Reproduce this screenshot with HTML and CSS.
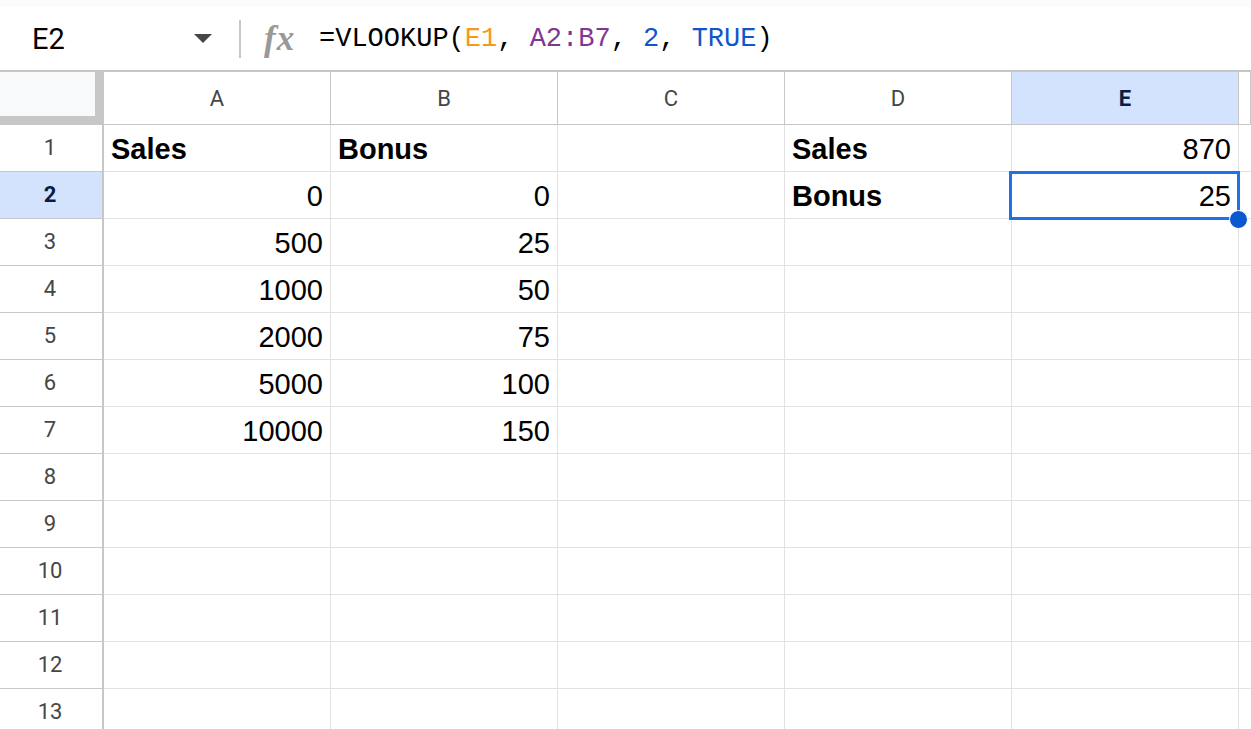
FILE: index.html
```html
<!DOCTYPE html>
<html>
<head>
<meta charset="utf-8">
<link rel="stylesheet" href="styles.css">
</head>
<body>
<div class="topstrip"></div>
<div class="fbar">
  <div class="namebox"><span class="ref">E2</span><span class="caret"></span></div>
  <div class="sep"></div>
  <span class="fx">fx</span>
  <div class="formula">=VLOOKUP(<span class="c-o">E1</span>, <span class="c-p">A2:B7</span>, <span class="c-b">2</span>, <span class="c-b">TRUE</span>)</div>
</div>
<div class="grid">
  <div class="corner"></div>
  <div class="ch">A</div>
  <div class="ch">B</div>
  <div class="ch">C</div>
  <div class="ch">D</div>
  <div class="ch ch-sel">E</div>
  <div class="ch"></div>

  <div class="rh">1</div>
  <div class="c b">Sales</div>
  <div class="c b">Bonus</div>
  <div class="c"></div>
  <div class="c b">Sales</div>
  <div class="c n">870</div>
  <div class="c"></div>

  <div class="rh rh-sel">2</div>
  <div class="c n">0</div>
  <div class="c n">0</div>
  <div class="c"></div>
  <div class="c b">Bonus</div>
  <div class="c n active">25<span class="selbox"></span><span class="handle"></span></div>
  <div class="c"></div>

  <div class="rh">3</div>
  <div class="c n">500</div>
  <div class="c n">25</div>
  <div class="c"></div><div class="c"></div><div class="c"></div><div class="c"></div>

  <div class="rh">4</div>
  <div class="c n">1000</div>
  <div class="c n">50</div>
  <div class="c"></div><div class="c"></div><div class="c"></div><div class="c"></div>

  <div class="rh">5</div>
  <div class="c n">2000</div>
  <div class="c n">75</div>
  <div class="c"></div><div class="c"></div><div class="c"></div><div class="c"></div>

  <div class="rh">6</div>
  <div class="c n">5000</div>
  <div class="c n">100</div>
  <div class="c"></div><div class="c"></div><div class="c"></div><div class="c"></div>

  <div class="rh">7</div>
  <div class="c n">10000</div>
  <div class="c n">150</div>
  <div class="c"></div><div class="c"></div><div class="c"></div><div class="c"></div>

  <div class="rh">8</div>
  <div class="c"></div><div class="c"></div><div class="c"></div><div class="c"></div><div class="c"></div><div class="c"></div>
  <div class="rh">9</div>
  <div class="c"></div><div class="c"></div><div class="c"></div><div class="c"></div><div class="c"></div><div class="c"></div>
  <div class="rh">10</div>
  <div class="c"></div><div class="c"></div><div class="c"></div><div class="c"></div><div class="c"></div><div class="c"></div>
  <div class="rh">11</div>
  <div class="c"></div><div class="c"></div><div class="c"></div><div class="c"></div><div class="c"></div><div class="c"></div>
  <div class="rh">12</div>
  <div class="c"></div><div class="c"></div><div class="c"></div><div class="c"></div><div class="c"></div><div class="c"></div>
  <div class="rh">13</div>
  <div class="c"></div><div class="c"></div><div class="c"></div><div class="c"></div><div class="c"></div><div class="c"></div>
</div>
</body>
</html>
```

FILE: styles.css
```css
* { box-sizing: border-box; }
html, body {
  margin: 0;
  padding: 0;
  width: 1251px;
  height: 729px;
  overflow: hidden;
  background: #ffffff;
}
.topstrip {
  height: 7px;
  background: #f9fbfd;
}
.fbar {
  height: 65px;
  display: flex;
  align-items: center;
  border-bottom: 2px solid #c7c7c7;
  background: #fff;
}
.namebox {
  width: 225px;
  display: flex;
  align-items: center;
  padding-left: 32px;
  padding-right: 13px;
}
.ref {
  font-family: Roboto, "Liberation Sans", sans-serif;
  font-size: 29px;
  color: #000;
  position: relative;
  top: 0;
}
.caret {
  margin-left: auto;
  width: 0;
  height: 0;
  border-left: 9px solid transparent;
  border-right: 9px solid transparent;
  border-top: 9px solid #444746;
}
.sep {
  margin-left: 14px;
  width: 2px;
  height: 38px;
  background: #c7c7c7;
}
.fx {
  margin-left: 23px;
  width: 34px;
  font-family: "Liberation Serif", serif;
  font-style: italic;
  font-weight: bold;
  font-size: 35px;
  letter-spacing: 1px;
  color: #999999;
  position: relative;
  top: 0;
}
.formula {
  margin-left: 21px;
  font-family: "Liberation Mono", "DejaVu Sans Mono", monospace;
  font-size: 27px;
  color: #000;
  white-space: pre;
  position: relative;
  top: 0;
}
.c-o { color: #f7981d; }
.c-p { color: #7e3794; }
.c-b { color: #1155cc; }

.grid {
  display: grid;
  grid-template-columns: 104px repeat(5, 227px) 12px;
  grid-template-rows: 53px;
  grid-auto-rows: 47px;
}
.corner {
  background: #f8f9fa;
  border-right: 9px solid #c7c7c7;
  border-bottom: 9px solid #c7c7c7;
}
.ch {
  border-right: 1px solid #c7c7c7;
  border-bottom: 1px solid #c7c7c7;
  display: flex;
  align-items: center;
  justify-content: center;
  font-family: Roboto, "Liberation Sans", sans-serif;
  font-size: 22px;
  color: #444746;
  padding-top: 1px;
}
.ch-sel {
  background: #d3e3fd;
  color: #041e49;
  font-weight: bold;
}
.rh {
  border-right: 2px solid #c7c7c7;
  border-bottom: 1px solid #c7c7c7;
  display: flex;
  align-items: center;
  justify-content: center;
  font-family: Roboto, "Liberation Sans", sans-serif;
  font-size: 22px;
  color: #444746;
  padding-bottom: 1px;
  padding-right: 2px;
}
.rh-sel {
  background: #d3e3fd;
  color: #041e49;
  font-weight: bold;
}
.c {
  border-right: 1px solid #e1e1e1;
  border-bottom: 1px solid #e1e1e1;
  display: flex;
  align-items: flex-end;
  padding: 0 7px 7px 7px;
  font-family: "Liberation Sans", Arial, sans-serif;
  font-size: 29px;
  line-height: 29px;
  color: #000;
  white-space: nowrap;
}
.b { font-weight: bold; }
.n { justify-content: flex-end; }
.active { position: relative; }
.selbox {
  position: absolute;
  left: -3px;
  right: -2px;
  top: -1px;
  bottom: -2px;
  border: 3px solid #1a73e8;
  z-index: 2;
}
.handle {
  position: absolute;
  right: -10px;
  bottom: -11px;
  width: 19px;
  height: 19px;
  border-radius: 50%;
  background: #0b57d0;
  border: 1.5px solid #ffffff;
  z-index: 3;
}
```
